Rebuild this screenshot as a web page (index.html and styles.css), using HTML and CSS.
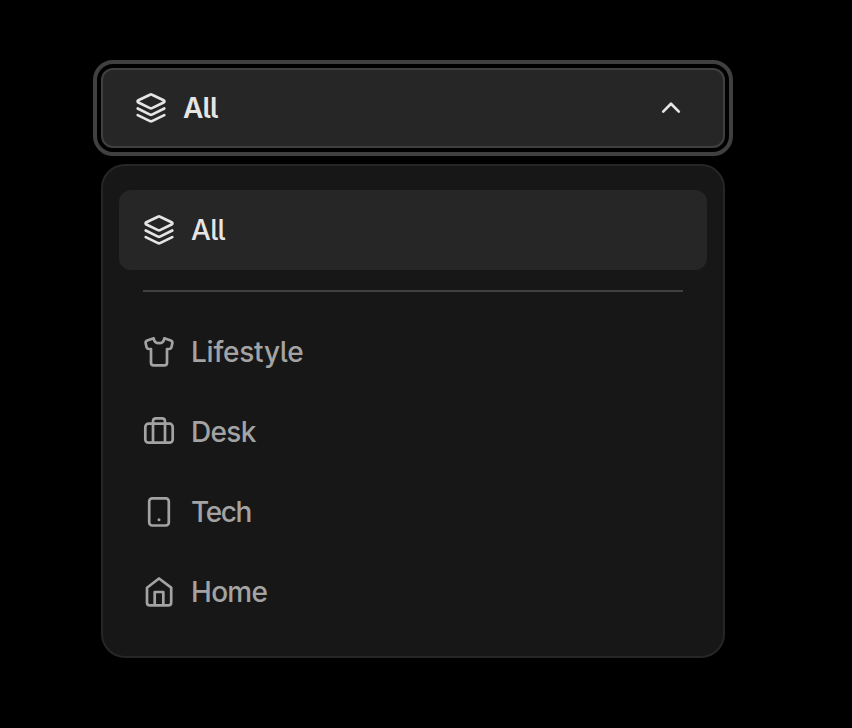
FILE: index.html
```html
<!DOCTYPE html>
<html lang="en">
  <head>
    <meta charset="UTF-8" />
    <meta name="viewport" content="width=device-width, initial-scale=1.0" />
    <title>Category select</title>
    <link rel="stylesheet" href="styles.css">
  </head>
  <body>
    <svg class="sprite" aria-hidden="true">
      <symbol id="layers" viewBox="0 0 32 32">
        <path d="M15 2.700 3.400 8.300c-1.100.6-1.100 1.600 0 2.200L15 16.100c.7.4 1.300.4 2 0l11.600-5.600c1.100-.6 1.100-1.600 0-2.200L17 2.700c-.7-.4-1.300-.4-2 0Z" />
        <path d="m2.700 16.500 12.300 6.100c.7.3 1.300.3 2 0l12.300-6.100" />
        <path d="m2.700 23.100 12.300 6c.7.3 1.300.3 2 0l12.300-6" />
      </symbol>
    </svg>

    <div class="select">
      <button class="trigger" type="button" aria-expanded="true">
        <svg class="icon"><use href="#layers" /></svg>
        <span class="label">All</span>
        <svg class="chevron" viewBox="0 0 24 24"><path d="m4.200 15.600 7.800-7.800 7.800 7.800" /></svg>
      </button>

      <ul class="menu">
        <li class="item active">
          <svg class="icon"><use href="#layers" /></svg>
          <span>All</span>
        </li>
        <li class="separator"></li>
        <li class="item wide">
          <svg class="icon" viewBox="0 0 32 32">
            <path d="M8 13v13.700c0 1.700 1 2.700 2.700 2.700h10.600c1.700 0 2.700-1 2.700-2.700V13h1.900c1.400 0 2.300-.7 2.600-2l.8-3.500c.3-1.400-.2-2.500-1.500-3L21.300 2.300c-.3 3-2.400 4.900-5.300 4.900s-5-1.900-5.300-4.900L4.200 4.500c-1.300.5-1.800 1.600-1.500 3l.8 3.500c.3 1.300 1.200 2 2.600 2Z" />
          </svg>
          <span>Lifestyle</span>
        </li>
        <li class="item">
          <svg class="icon" viewBox="0 0 32 32">
            <rect x="2.300" y="7.700" width="27.400" height="19" rx="3.200" />
            <path d="M10 26.700V5.300c0-1.900 1.100-3 3-3h6c1.900 0 3 1.100 3 3v21.400" />
          </svg>
          <span>Desk</span>
        </li>
        <li class="item tight">
          <svg class="icon" viewBox="0 0 32 32">
            <rect x="6.200" y="2.300" width="19.600" height="27.200" rx="3" />
            <circle class="dot" cx="16" cy="23.800" r="1.500" />
          </svg>
          <span>Tech</span>
        </li>
        <li class="item">
          <svg class="icon" viewBox="0 0 32 32">
            <path d="M4 11.700 16 2.500l12.200 9.200v14.700c0 1.900-1.100 3-3 3H7c-1.900 0-3-1.100-3-3Z" />
            <path d="M11.700 29V16h8.600v13" />
          </svg>
          <span>Home</span>
        </li>
      </ul>
    </div>
  </body>
</html>
```
FILE: styles.css
```css
* {
  box-sizing: border-box;
}

body {
  margin: 0;
  padding: 68px 0 0 101px;
  background-color: #000;
  font-family: Inter, "Liberation Sans", sans-serif;
  font-size: 28px;
  font-weight: 500;
  font-feature-settings: "cv05";
  letter-spacing: -0.7px;
}

.sprite {
  display: none;
}

.select {
  width: 624px;
}

.trigger {
  display: flex;
  align-items: center;
  gap: 16px;
  width: 100%;
  height: 80px;
  padding: 0 40px 0 32px;
  border: 2px solid #404040;
  border-radius: 12px;
  outline: 4px solid #404040;
  outline-offset: 4px;
  background-color: #262626;
  color: #e5e5e5;
  font: inherit;
  font-feature-settings: inherit;
  font-weight: 600;
  letter-spacing: -0.8px;
  text-align: left;
}

.label {
  flex: 1;
}

.icon,
.chevron {
  flex: none;
  width: 32px;
  height: 32px;
  fill: none;
  stroke: currentColor;
  stroke-width: 2.7;
  stroke-linecap: round;
  stroke-linejoin: round;
}

.chevron {
  width: 24px;
  height: 24px;
}

.menu {
  height: 494px;
  margin: 16px 0 0;
  padding: 24px 16px;
  border: 2px solid #262626;
  border-radius: 24px;
  background-color: #171717;
  list-style: none;
}

.item {
  display: flex;
  align-items: center;
  gap: 16px;
  height: 80px;
  padding: 0 24px;
  border-radius: 12px;
  color: #a3a3a3;
}

.item.active {
  background-color: #262626;
  color: #e5e5e5;
}

.wide {
  letter-spacing: -0.25px;
}

.tight {
  letter-spacing: -1.4px;
}

.separator {
  height: 2px;
  margin: 20px 24px;
  background-color: #404040;
}

.dot {
  fill: currentColor;
  stroke: none;
}
```
